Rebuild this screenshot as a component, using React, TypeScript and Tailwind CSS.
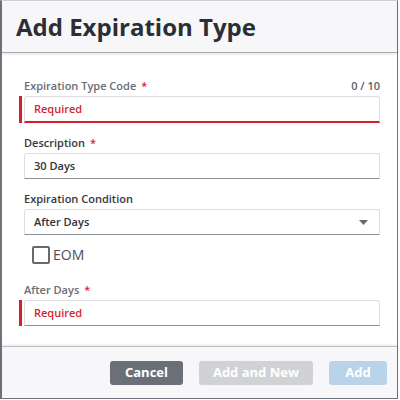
import React from 'react'

const font = { fontFamily: '"Open Sans", "Liberation Sans", sans-serif' }

function Label({ text, required, muted, right }: { text: string; required?: boolean; muted?: boolean; right?: string }) {
  return (
    <div className="flex items-center justify-between h-[14px] mb-[3px] text-[11px] font-semibold leading-[14px]">
      <span className={muted ? 'text-[#6a6d72]' : 'text-[#34373c]'}>
        {text}
        {required && <span className="text-[#d71f2b] ml-[5px]">*</span>}
      </span>
      {right && <span className="text-[#5c5f64]">{right}</span>}
    </div>
  )
}

function Field({ value, error, errorLine }: { value: string; error?: boolean; errorLine?: boolean }) {
  return (
    <div className="relative">
      {error && <div className="absolute left-[-5px] top-0 bottom-0 w-[3px] bg-[#d71f2b]" />}
      <div
        className={`flex items-center px-[9px] bg-white border border-[#dcdde0] rounded-t-[3px] text-[11px] font-semibold ${
          errorLine ? 'h-[27px] border-b-2 border-b-[#d71f2b]' : 'h-[26px] border-b-[#8c8f94]'
        } ${error ? 'text-[#d71f2b]' : 'text-[#2f3237]'}`}
      >
        {value}
      </div>
    </div>
  )
}

export default function App() {
  return (
    <div style={font} className="w-[398px] h-[399px] flex flex-col bg-white border border-[#6f737b] border-t-[#d3d5d9] border-l-2">
      {/* header */}
      <div className="h-[52px] shrink-0 flex items-center px-[14px] bg-[#f7f7f9] border-b border-[#a7aab0] shadow-[0_1px_3px_rgba(0,0,0,0.12)]">
        <h1 className="text-[24px] font-bold text-[#2b2f35] leading-none">Add Expiration Type</h1>
      </div>

      {/* body */}
      <div className="flex-1 pl-[22px] pr-[17px] pt-[26px]">
        <Label text="Expiration Type Code" required muted right="0 / 10" />
        <Field value="Required" error errorLine />

        <div className="mt-[13px]">
          <Label text="Description" required />
          <Field value="30 Days" />
        </div>

        <div className="mt-[13px]">
          <Label text="Expiration Condition" />
          <div className="flex items-center justify-between h-[26px] pl-[9px] pr-[11px] bg-white border border-[#dcdde0] border-b-[#8c8f94] rounded-t-[3px] text-[11px] font-semibold text-[#2f3237]">
            After Days
            <svg width="9" height="5" viewBox="0 0 9 5">
              <path d="M0 0h9L4.5 5z" fill="#65686d" />
            </svg>
          </div>
        </div>

        <div className="flex items-center mt-[11px] ml-[8px] h-[18px]">
          <div className="w-[18px] h-[18px] border-2 border-[#66696e] rounded-[2px]" />
          <span className="ml-[3px] text-[14px] text-[#4a4d52] leading-none">EOM</span>
        </div>

        <div className="mt-[19px]">
          <Label text="After Days" required muted />
          <Field value="Required" error />
        </div>
      </div>

      {/* footer */}
      <div className="h-[52px] shrink-0 flex items-center justify-end gap-4 pr-[10px] bg-[#f7f7f9] border-t border-[#b9bcc1] shadow-[0_-1px_3px_rgba(0,0,0,0.1)]">
        <button className="h-[24px] w-[73px] rounded-[3px] bg-[#6b6f78] text-white text-[13px] font-bold">Cancel</button>
        <button className="h-[24px] w-[114px] rounded-[3px] bg-[#d1d2d5] text-white text-[13px] font-bold">Add and New</button>
        <button className="h-[24px] w-[58px] rounded-[3px] bg-[#b8d3ea] text-white text-[13px] font-bold">Add</button>
      </div>
    </div>
  )
}
